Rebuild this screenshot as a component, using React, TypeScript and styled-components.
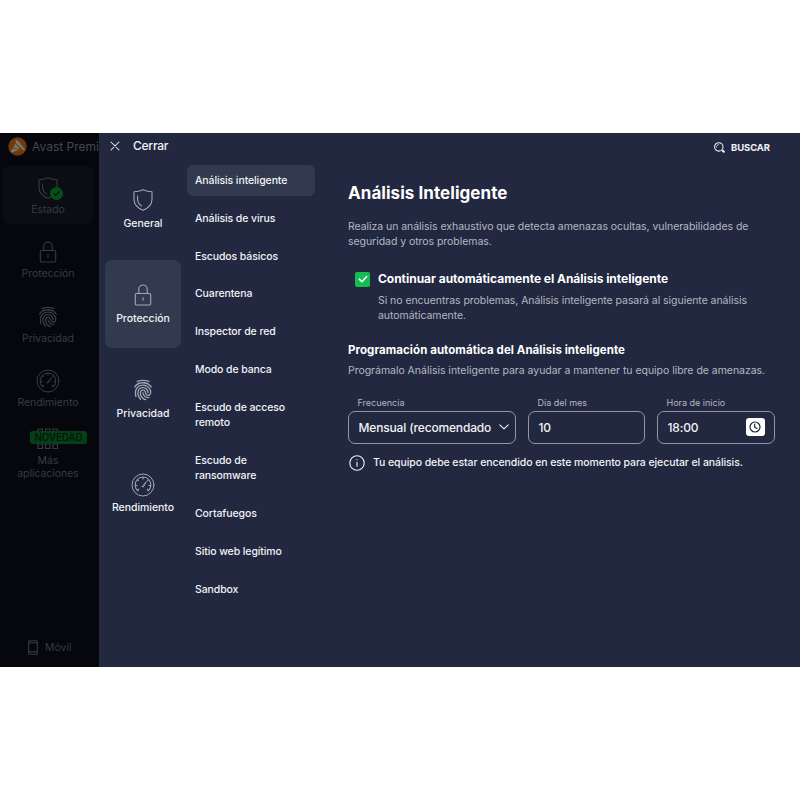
import React from "react";
import styled, { createGlobalStyle } from "styled-components";
import { IoFingerPrint } from "react-icons/io5";

const GlobalStyle = createGlobalStyle`
  *, *::before, *::after { box-sizing: border-box; }
  body { margin: 0; background: #fff; }
  button { font: inherit; color: inherit; border: 0; background: none; margin: 0; padding: 0; }
  h1, h2, p { margin: 0; }
  svg { flex-shrink: 0; }
`;

const Page = styled.div`
  width: 800px;
  height: 800px;
  padding: 133px 0;
  background: #fff;
  font-family: Inter, "Liberation Sans", sans-serif;
  font-size: 10.5px;
`;

const AppWindow = styled.main`
  display: grid;
  grid-template-columns: 99px 1fr;
  height: 534px;
  overflow: hidden;
  background: #212840;
`;

/* Dimmed application behind the settings drawer */
const Backdrop = styled.aside`
  display: flex;
  flex-direction: column;
  min-width: 0;
  overflow: hidden;
  background: #05070d;
  color: #393b3f;
`;

const Brand = styled.header`
  display: flex;
  align-items: center;
  gap: 5px;
  height: 26px;
  padding-left: 8px;
  font-size: 12px;
  white-space: nowrap;
  color: #46484c;
`;

const DimNav = styled.nav`
  display: flex;
  flex-direction: column;
  gap: 6.3px;
  padding: 7px 6px 0 3px;
`;

const DimItem = styled.button<{ $active?: boolean }>`
  display: flex;
  flex-direction: column;
  align-items: center;
  height: 58px;
  padding-top: 9px;
  border-radius: 6px;
  background: ${(p) => (p.$active ? "#0b0d13" : "transparent")};
`;

const DimLabel = styled.span`
  margin-top: 3px;
  line-height: 12.5px;
  letter-spacing: -0.04px;
`;

const MoreItem = styled(DimItem)`
  padding-top: 3px;
`;

const IconBox = styled.span`
  position: relative;
  display: flex;
  align-items: center;
  justify-content: center;
  width: 26px;
  height: 26px;
`;

const StatusDot = styled.span`
  position: absolute;
  left: 15px;
  top: 12px;
  display: flex;
  align-items: center;
  justify-content: center;
  width: 13px;
  height: 13px;
  border-radius: 50%;
  background: #045018;
  color: #05070d;
`;

const NewBadge = styled.span`
  position: absolute;
  left: -5px;
  top: 5px;
  width: 57px;
  height: 13px;
  border-radius: 3px;
  background: #043f15;
  color: #04120b;
  font-size: 9.8px;
  font-weight: 500;
  line-height: 13px;
  text-align: center;
`;

const Mobile = styled.button`
  display: flex;
  align-items: center;
  gap: 7px;
  margin: auto 0 12px 28px;
  height: 16px;
`;

const Drawer = styled.section`
  display: grid;
  grid-template-rows: 32px 1fr;
  min-width: 0;
  color: #f1f2f5;
`;

const TopBar = styled.header`
  display: flex;
  align-items: flex-start;
  justify-content: space-between;
  padding: 5px 30px 0 11px;
`;

const CloseButton = styled.button`
  display: flex;
  align-items: center;
  gap: 13px;
  height: 15px;
  font-size: 12px;
  font-weight: 500;
  letter-spacing: -0.25px;
`;

const SearchButton = styled.button`
  display: flex;
  align-items: center;
  gap: 6px;
  height: 19px;
  font-size: 9.5px;
  font-weight: 700;
  letter-spacing: -0.1px;
`;

const Columns = styled.div`
  display: grid;
  grid-template-columns: 76px 128px 1fr;
  column-gap: 6px;
  padding-left: 6px;
`;

const Categories = styled.nav`
  display: flex;
  flex-direction: column;
  gap: 6.8px;
`;

const Category = styled.button<{ $active?: boolean }>`
  display: flex;
  flex-direction: column;
  align-items: center;
  height: 88px;
  padding-top: 23.4px;
  border-radius: 7px;
  background: ${(p) => (p.$active ? "#323a4f" : "transparent")};
`;

const CategoryIcon = styled(IconBox)`
  height: 24px;
  color: #a3a7b3;
`;

const CategoryLabel = styled.span`
  margin-top: 4.6px;
  line-height: 14px;
  font-weight: 500;
  letter-spacing: -0.03px;
`;

const Sections = styled.nav`
  display: flex;
  flex-direction: column;
  gap: 6.8px;
`;

const SectionLink = styled.button<{ $active?: boolean }>`
  padding: 8px 24px 7.600px 8px;
  border-radius: 6px;
  background: ${(p) => (p.$active ? "#323a4f" : "transparent")};
  font-weight: 500;
  line-height: 15.4px;
  letter-spacing: -0.1px;
  text-align: left;
`;

const Content = styled.article`
  display: flex;
  flex-direction: column;
  align-items: flex-start;
  padding: 16px 20px 0 27px;
`;

const Title = styled.h1`
  font-size: 17px;
  font-weight: 700;
  line-height: 24px;
  letter-spacing: 0.05px;
  color: #fff;
`;

const Text = styled.p`
  line-height: 15.4px;
  letter-spacing: -0.05px;
  color: #b4b8c3;
  white-space: pre-line;
`;

const Intro = styled(Text)`
  margin-top: 14px;
`;

const Option = styled.label`
  display: grid;
  grid-template-columns: 15px 1fr;
  column-gap: 8px;
  margin: 21px 0 0 7px;
`;

const CheckBox = styled.span`
  display: flex;
  align-items: center;
  justify-content: center;
  width: 15px;
  height: 15px;
  margin-top: 1px;
  border-radius: 2px;
  background: #14bd4f;
  color: #fff;
`;

const OptionTitle = styled.span`
  display: block;
  margin-bottom: 6px;
  font-size: 12px;
  font-weight: 700;
  line-height: 16px;
  letter-spacing: -0.03px;
  color: #fff;
`;

const Subtitle = styled.h2`
  margin-top: 18px;
  font-size: 11.5px;
  font-weight: 700;
  line-height: 17px;
  letter-spacing: 0.06px;
  color: #fff;
`;

const ScheduleText = styled(Text)`
  margin-top: 4px;
  letter-spacing: -0.03px;
  white-space: nowrap;
`;

const Fields = styled.div`
  display: grid;
  grid-template-columns: 168px 117px 118px;
  column-gap: 12px;
  margin: 18px 0 0 -0.5px;
`;

const Field = styled.div`
  display: flex;
  flex-direction: column;
`;

const FieldLabel = styled.span`
  padding-left: 10px;
  font-size: 9px;
  line-height: 14px;
  color: #b4b8c3;
`;

const Control = styled.div`
  display: flex;
  align-items: center;
  justify-content: space-between;
  height: 33px;
  margin-top: 1px;
  padding: 0 6px 1px 10px;
  border: 1px solid #9397a5;
  border-radius: 7px;
  font-size: 12px;
  font-weight: 500;
  letter-spacing: -0.16px;
  white-space: nowrap;
`;

const ClockButton = styled.button`
  display: flex;
  align-items: center;
  justify-content: center;
  width: 19px;
  height: 18px;
  margin-right: 3px;
  border-radius: 3px;
  background: #fff;
  color: #22262f;
`;

const Notice = styled.div`
  display: flex;
  align-items: flex-start;
  gap: 8px;
  margin: 11px 0 0 1px;
  font-weight: 500;
  line-height: 15px;
  letter-spacing: -0.08px;
  white-space: nowrap;
`;

const line = {
  fill: "none",
  stroke: "currentColor",
  strokeLinecap: "round",
  strokeLinejoin: "round",
} as const;

const Shield = () => (
  <svg width="20" height="22" viewBox="0 0 20 22" {...line} strokeWidth="1.1">
    <path d="M10 .8C7 2.2 4 2.8 1 2.8v7.4c0 5 3.4 8.7 9 11 5.6-2.3 9-6 9-11V2.8c-3 0-6-.6-9-2Z" />
    <path d="M4.6 7v3c0 3 1.3 5.2 4 6.9" />
  </svg>
);

const Lock = () => (
  <svg width="18" height="22" viewBox="0 0 18 22" {...line} strokeWidth="1.1">
    <rect x="1.3" y="9.5" width="15.4" height="11.5" rx="1.2" />
    <path d="M4.8 9.5V5.2a4.2 4.2 0 0 1 8.4 0v4.300M9 13.500v2.700" />
  </svg>
);

const Gauge = () => (
  <svg width="24" height="24" viewBox="0 0 24 24" {...line}>
    <circle cx="12" cy="12" r="11" strokeWidth="1" />
    <path
      d="M6.8 17.9A7.9 7.9 0 1 1 17.2 17.9M6.8 17.9l.9-1.8M17.2 17.9l-.9-1.8M4.2 12.5h1.900M6.300 6.500l1.300 1.300M12 4.200v1.900M17.700 6.500l-1.300 1.300M19.800 12.500h-1.900"
      strokeWidth="1.05"
    />
    <path d="m11.3 13.5 4-4.9-3 5.400a.6.600 0 0 1-1-.5Z" strokeWidth=".9" />
  </svg>
);

const gridSteps = [1, 8.5, 16];

const Grid = () => (
  <svg width="22" height="22" viewBox="0 0 22 22" {...line} strokeWidth="1.2">
    {gridSteps.map((y) =>
      gridSteps.map((x) => <rect key={`${x}-${y}`} x={x} y={y} width="4.5" height="4.5" />)
    )}
  </svg>
);

const Check = ({ size }: { size: number }) => (
  <svg width={size} height={size} viewBox="0 0 10 10" {...line} strokeWidth="1.6">
    <path d="M1.3 5.2 3.9 7.7 8.7 2.5" />
  </svg>
);

const BrandMark = () => (
  <svg width="19" height="19" viewBox="0 0 19 19">
    <circle cx="9.5" cy="9.5" r="9.2" fill="#71380c" />
    <path
      d="M9.2 3.2c-1-.5-1.9.2-1.7 1.2l.4 1.8 7.6 7.2c.9.3 1.5-.5 1-1.4L11 4.5c-.4-.7-1-1-1.8-1.3ZM7.3 6.8 5.2 10.7l7.2 1.7ZM4.6 11.5 2.9 14c-.3.9.3 1.6 1.2 1.4l6.7-2.3Z"
      fill="#77736d"
    />
  </svg>
);

const Phone = () => (
  <svg width="10" height="15" viewBox="0 0 10 15" {...line} strokeWidth="1.1">
    <rect x=".7" y=".7" width="8.6" height="13.6" rx="1.3" />
    <path d="M1 2.8h8M1 11.9h8" />
  </svg>
);

const Cross = () => (
  <svg width="10" height="10" viewBox="0 0 10 10" {...line} strokeWidth="1.05">
    <path d="m1 1 8 8M9 1 1 9" />
  </svg>
);

const Magnifier = () => (
  <svg width="11" height="11" viewBox="0 0 11 11" {...line}>
    <circle cx="4.8" cy="4.9" r="4.2" strokeWidth="1.05" />
    <path d="M2.5 5.2c0-1.5.8-2.4 2.2-2.6" strokeWidth=".7" />
    <path d="m8 8 .5.5" strokeWidth="1" />
    <path d="m8.8 8.8 1 1" strokeWidth="2" />
  </svg>
);

const Chevron = () => (
  <svg width="10" height="6" viewBox="0 0 10 6" {...line} strokeWidth="1.1">
    <path d="m.8.8 4.2 4L9.2.8" />
  </svg>
);

const Clock = () => (
  <svg width="12" height="12" viewBox="0 0 12 12" {...line} strokeWidth="1.2">
    <circle cx="6" cy="6" r="5" />
    <path d="M5.7 3v3.2l2.3 1.3" />
  </svg>
);

const Info = () => (
  <svg width="16" height="16" viewBox="0 0 16 16" {...line} strokeWidth="1.1">
    <circle cx="8" cy="8" r="7.2" />
    <path d="M8 7.2v4M8 4.6v.2" />
  </svg>
);

const Fingerprint = () => <IoFingerPrint size={22} />;

const areas = [
  { label: "Protección", Icon: Lock },
  { label: "Privacidad", Icon: Fingerprint },
  { label: "Rendimiento", Icon: Gauge },
];

const sections = [
  "Análisis inteligente",
  "Análisis de virus",
  "Escudos básicos",
  "Cuarentena",
  "Inspector de red",
  "Modo de banca",
  "Escudo de acceso remoto",
  "Escudo de ransomware",
  "Cortafuegos",
  "Sitio web legítimo",
  "Sandbox",
];

export default function App() {
  return (
    <Page>
      <GlobalStyle />
      <AppWindow>
        <Backdrop>
          <Brand>
            <BrandMark />
            Avast Premium
          </Brand>
          <DimNav>
            <DimItem $active>
              <IconBox>
                <Shield />
                <StatusDot>
                  <Check size={7} />
                </StatusDot>
              </IconBox>
              <DimLabel>Estado</DimLabel>
            </DimItem>
            {areas.map(({ label, Icon }) => (
              <DimItem key={label}>
                <IconBox>
                  <Icon />
                </IconBox>
                <DimLabel>{label}</DimLabel>
              </DimItem>
            ))}
            <MoreItem>
              <IconBox>
                <Grid />
                <NewBadge>NOVEDAD</NewBadge>
              </IconBox>
              <DimLabel>
                Más
                <br />
                aplicaciones
              </DimLabel>
            </MoreItem>
          </DimNav>
          <Mobile>
            <Phone />
            Móvil
          </Mobile>
        </Backdrop>
        <Drawer>
          <TopBar>
            <CloseButton>
              <Cross />
              Cerrar
            </CloseButton>
            <SearchButton>
              <Magnifier />
              BUSCAR
            </SearchButton>
          </TopBar>
          <Columns>
            <Categories>
              {[{ label: "General", Icon: Shield }, ...areas].map(({ label, Icon }) => (
                <Category key={label} $active={label === "Protección"}>
                  <CategoryIcon>
                    <Icon />
                  </CategoryIcon>
                  <CategoryLabel>{label}</CategoryLabel>
                </Category>
              ))}
            </Categories>
            <Sections>
              {sections.map((name, i) => (
                <SectionLink key={name} $active={i === 0}>
                  {name}
                </SectionLink>
              ))}
            </Sections>
            <Content>
              <Title>Análisis Inteligente</Title>
              <Intro>
                {"Realiza un análisis exhaustivo que detecta amenazas ocultas, vulnerabilidades de\nseguridad y otros problemas."}
              </Intro>
              <Option>
                <CheckBox>
                  <Check size={10} />
                </CheckBox>
                <div>
                  <OptionTitle>Continuar automáticamente el Análisis inteligente</OptionTitle>
                  <Text>
                    {"Si no encuentras problemas, Análisis inteligente pasará al siguiente análisis\nautomáticamente."}
                  </Text>
                </div>
              </Option>
              <Subtitle>Programación automática del Análisis inteligente</Subtitle>
              <ScheduleText>
                Prográmalo Análisis inteligente para ayudar a mantener tu equipo libre de amenazas.
              </ScheduleText>
              <Fields>
                <Field>
                  <FieldLabel>Frecuencia</FieldLabel>
                  <Control>
                    Mensual (recomendado
                    <Chevron />
                  </Control>
                </Field>
                <Field>
                  <FieldLabel>Día del mes</FieldLabel>
                  <Control>10</Control>
                </Field>
                <Field>
                  <FieldLabel>Hora de inicio</FieldLabel>
                  <Control>
                    18:00
                    <ClockButton>
                      <Clock />
                    </ClockButton>
                  </Control>
                </Field>
              </Fields>
              <Notice>
                <Info />
                Tu equipo debe estar encendido en este momento para ejecutar el análisis.
              </Notice>
            </Content>
          </Columns>
        </Drawer>
      </AppWindow>
    </Page>
  );
}
